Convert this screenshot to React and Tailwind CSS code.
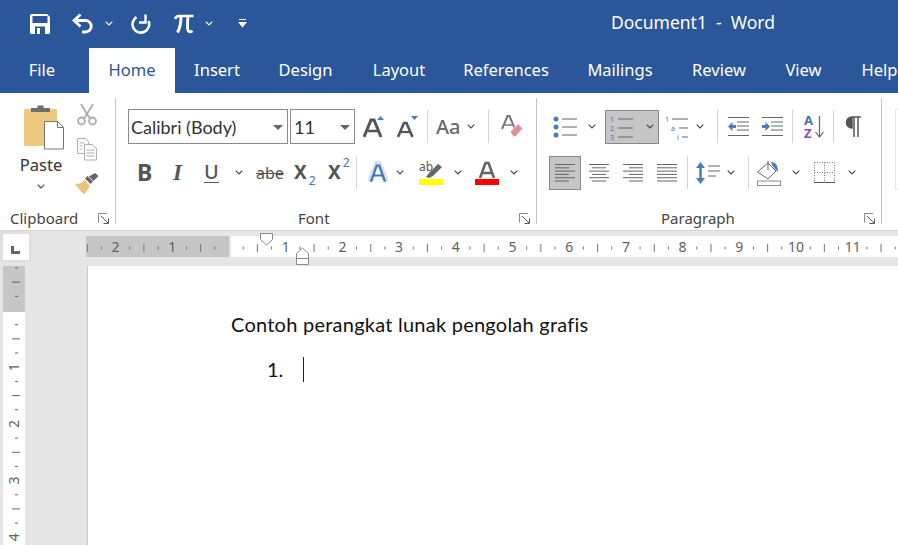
import React from "react"

const ui = { fontFamily: '"Noto Sans", sans-serif' }

const Chev = ({ className = "", color = "#444" }) => (
    <svg width="8" height="5" viewBox="0 0 8 5" className={`shrink-0 ${className}`}>
        <path d="M.7.7 4 4 7.3.7" fill="none" stroke={color} strokeWidth="1.1" />
    </svg>
)

const Sep = ({ className = "" }) => <div className={`w-px h-[33px] shrink-0 bg-[#d4d4d4] ${className}`} />

const Launcher = () => (
    <svg width="12" height="12" viewBox="0 0 12 12">
        <path d="M.5 9V.5H9M.5 .5v9" fill="none" stroke="#8a8a8a" />
        <path d="M3 3l7 7M10.500 5.500v5h-5" fill="none" stroke="#555" />
    </svg>
)

const Group = ({ label, labelClass = "", className = "", children }) => (
    <div className={`flex flex-col shrink-0 h-full ${className}`}>
        <div className="flex-1">{children}</div>
        <div className="flex items-center h-[17px] mb-[3px] pr-[5px] text-[15px] text-[#444]">
            <span className={labelClass}>{label}</span>
            <span className="ml-auto"><Launcher /></span>
        </div>
    </div>
)

const GroupSep = () => <div className="w-px h-[126px] mt-[5px] shrink-0 bg-[#c6c6c6]" />

const Lines = ({ rows, w = 20, className = "" }) => (
    <svg width={w} height="20" viewBox={`0 0 ${w} 20`} className={`shrink-0 ${className}`}>
        {rows.map(([a, b], i) => (
            <path key={i} d={`M${a} ${1.5 + i * 3.3}H${b}`} stroke="#666" strokeWidth="1" />
        ))}
    </svg>
)

const IndentIcon = ({ flip, className = "" }) => (
    <svg width="22" height="22" viewBox="0 0 22 22" className={`shrink-0 ${className}`}>
        <path d="M1 1.500h21M10 6h12M10 10h12M10 14h12M1 19.500h21" stroke="#666" />
        {flip
            ? <path d="M9 10.500 4.500 6v3H1v3h3.500v3z" fill="#4a7ebb" />
            : <path d="M1 10.500 5.500 6v3H9v3H5.500v3z" fill="#4a7ebb" />}
    </svg>
)

// ruler marks, 56.7px to a numbered step
const STEP = 56.7
const quarters = []
for (let i = -10; i <= 50; i++) quarters.push(i)

const HRuler = () => {
    const x0 = 229 - 86
    return (
        <svg width="812" height="35" viewBox="0 0 812 35" className="shrink-0">
            <rect x="0" y="5" width="143" height="21" fill="#c6c6c6" />
            <rect x="145" y="5" width="667" height="21" fill="#fff" />
            {quarters.map(i => {
                const x = x0 + (i * STEP) / 4
                if (x < 0 || x > 812) return null
                if (i === 0) return null
                if (i % 4 === 0) {
                    return <text key={i} x={x} y="21" textAnchor="middle" fontSize="14" fill="#5f5f5f" fontFamily="Noto Sans, sans-serif">{Math.abs(i / 4)}</text>
                }
                if (i % 2 === 0) return <path key={i} d={`M${x} 13v8`} stroke="#777" />
                return <path key={i} d={`M${x} 15.500v3`} stroke="#777" />
            })}
            {/* indent markers */}
            <path d="M174.500 2.500h12v6l-6 5.500-6-5.500z" fill="#fff" stroke="#8a8a8a" />
            <path d="M210.500 33.500v-11l6-5.500 6 5.500v11zM210.500 27.500h12" fill="#fff" stroke="#8a8a8a" />
        </svg>
    )
}

const VRuler = () => {
    const y0 = 310.500 - 266
    return (
        <svg width="22" height="279" viewBox="0 0 22 279" className="shrink-0">
            <rect x="0" y="0" width="22" height="46" fill="#c6c6c6" />
            <rect x="0" y="46" width="22" height="233" fill="#fff" />
            {quarters.map(i => {
                const y = y0 + (i * STEP) / 4
                if (y < 0 || y > 279 || i === 0) return null
                if (i % 4 === 0) {
                    return (
                        <text key={i} x="0" y="0" transform={`translate(16 ${y}) rotate(-90)`} textAnchor="middle" fontSize="14" fill="#5f5f5f" fontFamily="Noto Sans, sans-serif">{Math.abs(i / 4)}</text>
                    )
                }
                if (i % 2 === 0) return <path key={i} d={`M9 ${y}h8`} stroke="#666" />
                return <path key={i} d={`M12 ${y}h3`} stroke="#666" />
            })}
        </svg>
    )
}

export default function App() {
    const tabs = [
        ["Insert", "w-[84px]"],
        ["Design", "w-[93px]"],
        ["Layout", "w-[94px]"],
        ["References", "w-[120px]"],
        ["Mailings", "w-[108px]"],
        ["Review", "w-[90px]"],
        ["View", "w-[79px]"],
        ["Help", "w-[73px]"],
    ]
    return (
        <div className="w-[898px] h-[545px] overflow-hidden flex flex-col bg-white" style={ui}>
            {/* Title bar */}
            <div className="h-[47px] shrink-0 bg-[#2b579a] flex items-center text-white">
                <svg width="20" height="20" viewBox="0 0 20 20" className="ml-[30px] shrink-0">
                    <path d="M0 1.500A1.500 1.500 0 0 1 1.500 0H17l3 3v15.500a1.500 1.500 0 0 1-1.500 1.500h-17A1.500 1.500 0 0 1 0 18.500z" fill="#fff" />
                    <rect x="2.500" y="2" width="15" height="7" fill="#2b579a" />
                    <rect x="5" y="12.500" width="10" height="7.500" fill="#2b579a" />
                    <rect x="7" y="14" width="3" height="6" fill="#fff" />
                </svg>
                <svg width="22" height="21" viewBox="0 0 22 21" className="ml-[22px] shrink-0">
                    <path d="M8.500 1.500 2 7.500l6.500 6M2.500 7.500h11a5.700 5.700 0 0 1 0 11.500H10" fill="none" stroke="#fff" strokeWidth="2.800" />
                </svg>
                <Chev color="#fff" className="ml-[11px]" />
                <svg width="20" height="21" viewBox="0 0 20 21" className="ml-[18px] shrink-0">
                    <path d="M5.500 4.200A8.300 8.300 0 1 0 17.500 8" fill="none" stroke="#fff" strokeWidth="2.600" />
                    <path d="M14.500 1.500v8H8" fill="none" stroke="#fff" strokeWidth="2.400" />
                </svg>
                <svg width="20" height="21" viewBox="0 0 20 21" className="ml-[23px] shrink-0">
                    <g fill="none" stroke="#fff">
                        <path d="M1 6C2 3.500 3 3 5 3h14.500" strokeWidth="2.700" />
                        <path d="M7 3C7 10 6 15 3.500 19.500" strokeWidth="3" />
                        <path d="M14 3c-.5 6-.6 10-.3 13 .2 3 2.500 3.500 4.800 1.800" strokeWidth="2.800" />
                    </g>
                </svg>
                <Chev color="#fff" className="ml-[11px]" />
                <svg width="9" height="9" viewBox="0 0 9 9" className="ml-[25px] shrink-0">
                    <path d="M1 .5h7" stroke="#fff" />
                    <path d="M0 3h9L4.500 8.500z" fill="#fff" />
                </svg>
                <div className="ml-[364px] -mt-[2px] text-[17.5px] whitespace-pre">Document1  -  Word</div>
            </div>

            {/* Tabs */}
            <div className="h-[46px] shrink-0 bg-[#2b579a] flex text-[16.5px] text-white whitespace-nowrap">
                <div className="w-[64px] shrink-0 ml-[10px] mr-[15px] pt-[11px] text-center">File</div>
                <div className="w-[86px] shrink-0 mt-px pt-[10px] bg-white text-[#2b579a] text-center">Home</div>
                {tabs.map(([t, w]) => (
                    <div key={t} className={`${w} shrink-0 pt-[11px] text-center`}>{t}</div>
                ))}
            </div>

            {/* Ribbon */}
            <div className="h-[137px] shrink-0 flex bg-white text-[#444]">
                <Group label="Clipboard" labelClass="ml-[10px]" className="w-[115px]">
                    <div className="flex">
                        <div className="w-[70px] flex flex-col items-center pt-[11px] ml-[6px]">
                            <svg width="41" height="46" viewBox="0 0 41 46" className="ml-[6px]">
                                <rect x="0" y="5" width="33" height="37" rx="1.500" fill="#edc87e" />
                                <path d="M7 8V4h6.500V1.500h6V4H26v4z" fill="#6f6f6f" />
                                <path d="M20.500 17.500h13l6 6v21.500h-19z" fill="#fff" stroke="#777" />
                                <path d="M33.500 17.500v6h6" fill="none" stroke="#777" />
                            </svg>
                            <div className="mt-[3px] text-[16.5px] leading-[24px] text-[#333]">Paste</div>
                            <Chev className="mt-[7px]" />
                        </div>
                        <div className="flex flex-col pt-[10px]">
                            <svg width="22" height="23" viewBox="0 0 22 23">
                                <g fill="none" stroke="#ababab" strokeWidth="1.800">
                                    <path d="M5 1l8.500 14M17 1 8.500 15" />
                                    <circle cx="5.500" cy="18" r="3.500" />
                                    <circle cx="16.500" cy="18" r="3.500" />
                                </g>
                            </svg>
                            <svg width="22" height="23" viewBox="0 0 22 23" className="mt-[12px]">
                                <g fill="#fff" stroke="#b0b0b0">
                                    <path d="M1.500 .5h8l3 3v12h-11z" />
                                    <path d="M8.500 6.500h8l4 4v11.500h-12z" />
                                    <path d="M3.500 5h5M3.500 8h3M3.500 11h3M10.500 12h8M10.500 15h8M10.500 18h8" />
                                </g>
                            </svg>
                            <svg width="24" height="22" viewBox="0 0 24 22" className="mt-[12px] -ml-px">
                                <path d="M0 11c4 0 7-1 9.500-4l5.500 6c-2 3-4 6-6 8.500C6 19 3 15 0 11z" fill="#eac27c" />
                                <path d="M10 5.500 15.500 11l2.500-2.500-5.500-5.500z" fill="#666" />
                                <path d="M14 3.500 18.500 8 23.500 3 20 0z" fill="#666" />
                            </svg>
                        </div>
                    </div>
                </Group>
                <GroupSep />

                <Group label="Font" labelClass="ml-[182px]" className="w-[420px]">
                    <div className="flex items-center h-[35px] mt-[16px]">
                        <div className="ml-[12px] w-[160px] h-[35px] shrink-0 border border-[#8a8a8a] flex items-center justify-between pt-[2px] pl-[2px] pr-[4px] text-[18px] text-[#333]" style={{ fontFamily: "Lato, sans-serif" }}>
                            <span>Calibri (Body)</span>
                            <svg width="10" height="5" viewBox="0 0 10 5"><path d="M0 0h10L5 5z" fill="#666" /></svg>
                        </div>
                        <div className="ml-[2px] w-[65px] h-[35px] shrink-0 border border-[#8a8a8a] flex items-center justify-between pt-[2px] pl-[3px] pr-[4px] text-[18px] text-[#333]" style={{ fontFamily: "Lato, sans-serif" }}>
                            <span>11</span>
                            <svg width="10" height="5" viewBox="0 0 10 5"><path d="M0 0h10L5 5z" fill="#666" /></svg>
                        </div>
                        <svg width="22" height="22" viewBox="0 0 22 22" className="ml-[8px] shrink-0">
                            <path d="M1 21 8 4h3l7 17" fill="none" stroke="#555" strokeWidth="3" />
                            <path d="M5 15h10" stroke="#555" strokeWidth="2.500" />
                            <path d="M14 4l3.500-4L21 4z" fill="#4a7ebb" />
                        </svg>
                        <svg width="22" height="22" viewBox="0 0 22 22" className="ml-[12px] shrink-0">
                            <path d="M1 21 7 7h2.500l6 14" fill="none" stroke="#555" strokeWidth="2.600" />
                            <path d="M4 16h9" stroke="#555" strokeWidth="2.200" />
                            <path d="M14 0h7l-3.500 4z" fill="#4a7ebb" />
                        </svg>
                        <Sep className="ml-[8px]" />
                        <span className="ml-[8px] w-[25px] shrink-0 text-[20px] font-medium text-[#6a6a6a] leading-none">Aa</span>
                        <Chev className="ml-[6px]" />
                        <Sep className="ml-[13px]" />
                        <svg width="24" height="24" viewBox="0 0 24 24" className="ml-[11px] shrink-0">
                            <path d="M2 14 7.500 1h2l5 12" fill="none" stroke="#777" strokeWidth="2" />
                            <path d="M4 10h8" stroke="#777" strokeWidth="1.500" />
                            <path d="M10 17 18 8.500l5 5L15 22h-1.500z" fill="#e88b9b" stroke="#fff" />
                        </svg>
                    </div>
                    <div className="flex items-center h-[35px] mt-[11px] text-[#555]">
                        <span className="ml-[21px] w-[15px] text-center font-bold text-[23px] leading-none shrink-0">B</span>
                        <span className="ml-[18px] w-[15px] text-center italic font-bold text-[23px] leading-none shrink-0" style={{ fontFamily: '"Liberation Serif", serif' }}>I</span>
                        <span className="ml-[19px] w-[15px] text-center text-[20px] leading-[20px] shrink-0 border-b border-[#555] font-medium">U</span>
                        <Chev className="ml-[16px]" />
                        <span className="ml-[13px] w-[26px] text-center text-[16px] leading-none shrink-0 line-through">abe</span>
                        <span className="ml-[12px] w-[21px] shrink-0 flex items-end font-bold text-[19px] leading-none">X<span className="text-[12px] font-normal text-[#3f74b5] -mb-[5px] ml-[2px]">2</span></span>
                        <span className="ml-[13px] w-[20px] shrink-0 flex items-start font-bold text-[19px] leading-none">X<span className="text-[12px] font-normal text-[#3f74b5] -mt-[6px] ml-[2px]">2</span></span>
                        <Sep className="ml-[8px]" />
                        <svg width="20" height="24" viewBox="0 0 20 24" className="ml-[11px] shrink-0">
                            <path d="M2 21 8.500 3h3L18 21" fill="none" stroke="#d3e0f0" strokeWidth="5.500" />
                            <path d="M3 20.500 8.700 4.500h2.600L17 20.500M5.500 14.500h9" fill="none" stroke="#3f74b5" strokeWidth="2.200" />
                        </svg>
                        <Chev className="ml-[8px]" />
                        <svg width="24" height="24" viewBox="0 0 24 24" className="ml-[15px] shrink-0">
                            <text x="0" y="10" fontSize="12" fill="#555" fontFamily="Noto Sans, sans-serif">ab</text>
                            <path d="M7 16 10 12 19 3l4 3-9 9-4 2z" fill="#666" />
                            <rect x="0" y="18" width="24" height="6" fill="#ffff00" />
                        </svg>
                        <Chev className="ml-[11px]" />
                        <svg width="24" height="24" viewBox="0 0 24 24" className="ml-[13px] shrink-0">
                            <path d="M5 17 10.500 2h3L19 17M7.500 12h9" fill="none" stroke="#666" strokeWidth="2.600" />
                            <rect x="0" y="18" width="24" height="6" fill="#ff0000" />
                        </svg>
                        <Chev className="ml-[11px]" />
                    </div>
                </Group>
                <GroupSep />

                <Group label="Paragraph" labelClass="ml-[124px]" className="w-[344px]">
                    <div className="flex items-center h-[35px] mt-[16px]">
                        <svg width="25" height="24" viewBox="0 0 25 24" className="ml-[16px] shrink-0">
                            <circle cx="3" cy="4" r="2.500" fill="#4a7ebb" />
                            <circle cx="3" cy="12" r="2.500" fill="#4a7ebb" />
                            <circle cx="3" cy="20" r="2.500" fill="#4a7ebb" />
                            <path d="M9 4h15M9 12h15M9 20h15" stroke="#666" />
                        </svg>
                        <Chev className="ml-[10px]" />
                        <div className="ml-[9px] w-[54px] h-[34px] shrink-0 bg-[#c6c6c6] border border-[#8a8a8a] flex items-center pl-[4px]">
                            <svg width="24" height="28" viewBox="0 0 24 28" className="shrink-0">
                                <text x="0" y="9" fontSize="7" fill="#3f74b5" fontFamily="Noto Sans, sans-serif">1</text>
                                <text x="0" y="18" fontSize="7" fill="#3f74b5" fontFamily="Noto Sans, sans-serif">2</text>
                                <text x="0" y="27" fontSize="7" fill="#3f74b5" fontFamily="Noto Sans, sans-serif">3</text>
                                <path d="M8 6h15M8 15h15M8 24h15" stroke="#666" />
                            </svg>
                            <Chev className="ml-[12px]" />
                        </div>
                        <svg width="25" height="28" viewBox="0 0 25 28" className="ml-[6px] shrink-0">
                            <text x="0" y="9" fontSize="7" fill="#3f74b5" fontFamily="Noto Sans, sans-serif">1</text>
                            <text x="6" y="18" fontSize="7" fill="#3f74b5" fontFamily="Noto Sans, sans-serif">a</text>
                            <text x="12" y="27" fontSize="7" fill="#3f74b5" fontFamily="Noto Sans, sans-serif">i</text>
                            <path d="M7 6h16M14 15h9M17 24h6" stroke="#666" />
                        </svg>
                        <Chev className="ml-[6px]" />
                        <Sep className="ml-[13px]" />
                        <IndentIcon className="ml-[9px]" />
                        <IndentIcon flip className="ml-[12px]" />
                        <Sep className="ml-[9px]" />
                        <svg width="21" height="30" viewBox="0 0 21 30" className="ml-[11px] shrink-0">
                            <text x="0" y="13" fontSize="13" fontWeight="700" fill="#3f74b5" fontFamily="Noto Sans, sans-serif">A</text>
                            <text x="0" y="26" fontSize="13" fontWeight="700" fill="#8a4fa8" fontFamily="Noto Sans, sans-serif">Z</text>
                            <path d="M15.500 4v21M11.500 20l4 5 4-5" fill="none" stroke="#666" strokeWidth="1.200" />
                        </svg>
                        <Sep className="ml-[8px]" />
                        <svg width="16" height="22" viewBox="0 0 16 22" className="ml-[11px] shrink-0">
                            <path d="M7 1a5.500 5.500 0 0 0 0 11V1zM7 1h9M9 1v20M13 1v20" fill="#555" stroke="#555" strokeWidth="1.500" />
                        </svg>
                    </div>
                    <div className="flex items-center h-[35px] mt-[11px]">
                        <div className="ml-[12px] w-[32px] h-[34px] shrink-0 bg-[#c6c6c6] border border-[#8a8a8a] flex items-center justify-center">
                            <Lines w={20} rows={[[0, 20], [0, 14], [0, 20], [0, 14], [0, 20], [0, 14]]} />
                        </div>
                        <Lines className="ml-[8px]" rows={[[0, 20], [3, 17], [0, 20], [3, 17], [0, 20], [3, 17]]} />
                        <Lines className="ml-[14px]" rows={[[0, 20], [6, 20], [0, 20], [6, 20], [0, 20], [6, 20]]} />
                        <Lines className="ml-[14px]" rows={[[0, 20], [0, 20], [0, 20], [0, 20], [0, 20], [0, 20]]} />
                        <Sep className="ml-[10px]" />
                        <svg width="24" height="24" viewBox="0 0 24 24" className="ml-[8px] shrink-0">
                            <path d="M4.500 6v12" stroke="#4a7ebb" strokeWidth="2.500" />
                            <path d="M0 7l4.500-6L9 7zM0 17l4.500 6L9 17z" fill="#4a7ebb" />
                            <path d="M12 5h12M12 10h12M12 15h8" stroke="#666" />
                        </svg>
                        <Chev className="ml-[7px]" />
                        <Sep className="ml-[13px]" />
                        <svg width="24" height="26" viewBox="0 0 24 26" className="ml-[8px] shrink-0">
                            <path d="M.5 12 11 3l8 8-8 8z" fill="#fff" stroke="#666" />
                            <path d="M11 1v9" stroke="#666" />
                            <path d="M14 2c5 0 7 4 7 10l-3-3-3-4z" fill="#4a7ebb" />
                            <rect x=".5" y="21" width="23" height="4.500" fill="#fff" stroke="#8a8a8a" />
                        </svg>
                        <Chev className="ml-[11px]" />
                        <svg width="21" height="21" viewBox="0 0 21 21" className="ml-[14px] shrink-0">
                            <path d="M.5.500h20M.5 10.500h20M10.500.500v20M.5.500v20M20.500.500v20" fill="none" stroke="#777" strokeDasharray="1 1.500" />
                            <path d="M0 20.500h21" stroke="#555" />
                        </svg>
                        <Chev className="ml-[13px]" />
                    </div>
                </Group>
                <GroupSep />
                <div className="ml-[13px] mt-[16px] w-[10px] h-[81px] border-l border-t border-b border-[#e4e4e4]" />
            </div>

            {/* Ruler band */}
            <div className="h-[36px] shrink-0 bg-[#e6e6e6] border-t border-[#d6d6d6] flex">
                <div className="w-[31px] h-[31px] shrink-0 bg-[#e2dede] flex items-center justify-center">
                    <div className="w-[26px] h-[26px] bg-white flex items-center justify-center">
                        <svg width="9" height="8" viewBox="0 0 9 8" className="mt-[6px]"><path d="M0 0h3v5h6v3H0z" fill="#666" /></svg>
                    </div>
                </div>
                <div className="ml-[55px]"><HRuler /></div>
            </div>

            {/* Document area */}
            <div className="flex-1 flex min-h-0">
                <div className="w-[88px] shrink-0 bg-[#e6e6e6] border-r border-[#c6c6c6] pl-[3px]">
                    <VRuler />
                </div>
                <div className="flex-1 bg-white pl-[143px] pt-[45px] text-[20px] text-[#111]" style={{ fontFamily: "Lato, sans-serif" }}>
                    <div className="leading-[26px] whitespace-nowrap tracking-[0.24px]">Contoh perangkat lunak pengolah grafis</div>
                    <div className="flex items-center h-[26px] mt-[19px] pl-[36px]">
                        <span className="w-[36px] shrink-0">1.</span>
                        <div className="w-px h-[25px] bg-[#222]" />
                    </div>
                </div>
            </div>
        </div>
    )
}
